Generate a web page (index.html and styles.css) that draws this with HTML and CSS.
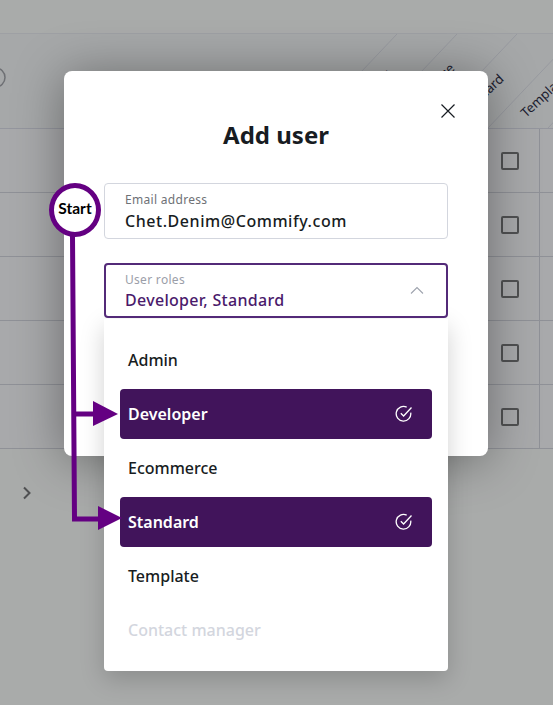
FILE: index.html
```html
<!DOCTYPE html>
<html lang="en">
<head>
<meta charset="utf-8">
<title>Add user</title>
<link rel="stylesheet" href="styles.css">
</head>
<body>
<div class="page">
  <div class="topbar"></div>
  <div class="table-head">
  <svg class="head-art" width="553" height="94" viewBox="0 34 553 94">
    <circle class="head-ring" cx="-4.500" cy="77.500" r="9.500"/>
    <g class="head-lines">
      <line x1="397" y1="34" x2="308" y2="128"/>
      <line x1="457" y1="34" x2="368" y2="128"/>
      <line x1="517" y1="34" x2="428" y2="128"/>
      <line x1="577" y1="34" x2="488" y2="128"/>
      <line x1="637" y1="34" x2="548" y2="128"/>
    </g>
    <g class="head-labels">
      <text transform="translate(346 118) rotate(-43)">Developer</text>
      <text transform="translate(403 118) rotate(-43)">Ecommerce</text>
      <text transform="translate(464 118) rotate(-43)">Standard</text>
      <text transform="translate(526 118) rotate(-43)">Template</text>
    </g>
  </svg>
  </div>
  <div class="rows">
    <div class="row"><span class="box"></span><span class="cell"></span></div>
    <div class="row"><span class="box"></span><span class="cell"></span></div>
    <div class="row"><span class="box"></span><span class="cell"></span></div>
    <div class="row"><span class="box"></span><span class="cell"></span></div>
    <div class="row"><span class="box"></span><span class="cell"></span></div>
  </div>
  <div class="pager">
    <svg width="10" height="14" viewBox="0 0 10 14"><path class="pager-icon" d="M2 1.500 7.500 7 2 12.500"/></svg>
  </div>
</div>

<div class="modal">
  <button class="close" aria-label="Close">
    <svg width="16" height="16" viewBox="0 0 16 16"><path class="close-icon" d="M1.500 1.500 14.500 14.500M14.500 1.500 1.500 14.500"/></svg>
  </button>
  <h1 class="title">Add user</h1>
  <div class="field">
    <span class="field-label">Email address</span>
    <span class="field-value">Chet.Denim@Commify.com</span>
  </div>
  <div class="field field-open">
    <span class="field-label">User roles</span>
    <span class="field-value">Developer, Standard</span>
    <svg class="chevron" width="14" height="8" viewBox="0 0 14 8"><path d="M1 7.500 7 1.500 13 7.500"/></svg>
  </div>
</div>

<ul class="menu">
  <li class="item">Admin</li>
  <li class="item item-on">Developer
    <svg class="check" width="18" height="18" viewBox="0 0 18 18"><path d="M15.700 7.600A7.300 7.300 0 1 1 11.700 2.200"/><path d="M5.800 8.300 8.600 11 16.500 2.500"/></svg>
  </li>
  <li class="item">Ecommerce</li>
  <li class="item item-on">Standard
    <svg class="check" width="18" height="18" viewBox="0 0 18 18"><path d="M15.700 7.600A7.300 7.300 0 1 1 11.700 2.200"/><path d="M5.800 8.300 8.600 11 16.500 2.500"/></svg>
  </li>
  <li class="item">Template</li>
  <li class="item item-off">Contact manager</li>
</ul>

<svg class="guide" width="553" height="705" viewBox="0 0 553 705">
  <path class="guide-line" d="M72.500 236 74.500 519H100M74 414H95"/>
  <polygon class="guide-head" points="93,401 118,414 93,426"/>
  <polygon class="guide-head" points="98,506 122,518 98,530"/>
</svg>
<div class="start">Start</div>
</body>
</html>
```
FILE: styles.css
```css
* { box-sizing: border-box; }
html, body { margin: 0; height: 100%; }
body {
  position: relative;
  width: 553px;
  height: 705px;
  overflow: hidden;
  background: #a9abaa;
  font-family: "Noto Sans", "Open Sans", sans-serif;
  color: #171c22;
}
.page { display: flex; flex-direction: column; height: 705px; }
.topbar { height: 33px; flex: none; }
.table-head {
  flex: none;
  height: 96px;
  background: #a6a8a9;
  border-top: 1px solid #9ea0a4;
  border-bottom: 1px solid #94969e;
}
.head-art { display: block; }
.head-ring { fill: none; stroke: #6e7074; stroke-width: 1.500px; }
.head-lines line { stroke: #989aa0; stroke-width: 1px; }
.head-labels text { font-size: 13px; fill: #1c2030; }
.rows { display: flex; flex-direction: column; flex: none; background: #a8a9ab; }
.row {
  position: relative;
  height: 64px;
  border-bottom: 1px solid #8f9197;
  display: flex;
  justify-content: flex-end;
  align-items: center;
}
.box {
  width: 18px;
  height: 18px;
  margin-right: 20px;
  border: 2px solid #505152;
  border-radius: 2px;
}
.cell {
  align-self: stretch;
  width: 14px;
  border-left: 1px solid #8f9197;
}
.pager { padding: 37px 0 0 22px; }
.pager svg { display: block; }
.pager-icon { fill: none; stroke: #4f5052; stroke-width: 2px; }

.modal {
  position: absolute;
  left: 64px;
  top: 71px;
  width: 424px;
  height: 385px;
  padding: 46px 40px 0;
  background: #fff;
  border-radius: 8px;
  box-shadow: 0 4px 50px rgba(0, 0, 0, .38);
}
.close {
  position: absolute;
  top: 32px;
  right: 32px;
  width: 16px;
  height: 16px;
  padding: 0;
  border: 0;
  background: none;
}
.close svg { display: block; }
.close-icon { fill: none; stroke: #171c22; stroke-width: 1.200px; }
.title {
  margin: 0 0 30px;
  font-size: 24px;
  line-height: 36px;
  font-weight: 700;
  text-align: center;
}
.field {
  position: relative;
  z-index: 1;
  height: 56px;
  margin-bottom: 24px;
  padding: 7px 20px 0;
  border: 1px solid #d3d6de;
  border-radius: 4px;
  background: #fff;
}
.field-open { border: 2px solid #532a78; padding: 7px 19px 0; height: 55px; }
.field-label {
  display: block;
  font-size: 12px;
  line-height: 18px;
  letter-spacing: .3px;
  color: #6e7176;
}
.field-open .field-label { color: #9b9ea8; line-height: 16px; }
.field-value {
  display: block;
  font-size: 16px;
  line-height: 24px;
  font-weight: 500;
  letter-spacing: .55px;
}
.field-open .field-value { color: #4a1a6b; letter-spacing: .3px; }
.chevron { position: absolute; right: 22px; top: 21px; }
.chevron path { fill: none; stroke: #9ea3ae; stroke-width: 1.100px; }

.menu {
  position: absolute;
  left: 104px;
  top: 319px;
  width: 344px;
  height: 352px;
  margin: 0;
  padding: 16px 16px 16px;
  list-style: none;
  display: flex;
  flex-direction: column;
  gap: 4px;
  background: #fff;
  border-radius: 0 0 4px 4px;
  box-shadow: 0 8px 24px rgba(0, 0, 0, .18);
}
.item {
  display: flex;
  align-items: center;
  justify-content: space-between;
  height: 50px;
  padding: 0 19px 0 8px;
  font-size: 16px;
  font-weight: 500;
  border-radius: 4px;
}
.item-on { background: #41145b; color: #fff; font-weight: 600; }
.item-off { color: #d3d6de; }
.check { display: block; }
.check path { fill: none; stroke: #fff; stroke-width: 1.300px; }

.guide { position: absolute; left: 0; top: 0; pointer-events: none; }
.guide-line { fill: none; stroke: #640082; stroke-width: 5px; }
.guide-head { fill: #640082; }
.start {
  position: absolute;
  left: 49px;
  top: 183px;
  width: 52px;
  height: 54px;
  padding-bottom: 5px;
  display: flex;
  align-items: center;
  justify-content: center;
  background: #fff;
  border: 5px solid #640082;
  border-radius: 50%;
  font-family: "Lato", sans-serif;
  font-size: 15.500px;
  font-weight: 700;
  color: #000;
}
```
